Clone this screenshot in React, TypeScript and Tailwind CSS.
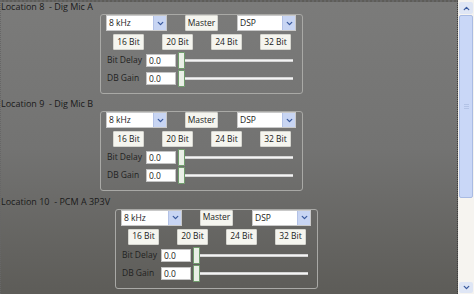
import { ChevronDown, ChevronUp } from 'lucide-react'

const font = { fontFamily: '"Open Sans", "Noto Sans", sans-serif' }

interface Location {
  title: string
}

const locations: Location[] = [
  { title: 'Location 8  - Dig Mic A' },
  { title: 'Location 9  - Dig Mic B' },
  { title: 'Location 10  - PCM A 3P3V' },
]

function Combo({ value, width }: { value: string; width: string }) {
  return (
    <div className={`flex h-[16px] items-stretch bg-white border border-[#c9c9c9] ${width}`}>
      <span className="flex-1 pl-[2px] leading-[14px] text-[#1b1b1b]">{value}</span>
      <span className="flex w-[13px] items-center justify-center bg-[#c8d5f3] border-l border-[#b3c2e6]">
        <ChevronDown className="h-[9px] w-[9px] text-[#3a5a9e]" strokeWidth={3.5} />
      </span>
    </div>
  )
}

function SmallButton({ label, width }: { label: string; width: string }) {
  return (
    <div
      className={`flex h-[16px] items-center justify-center bg-[#f5f5ef] border border-[#d6d6d0] rounded-[1px] text-[#1b1b1b] ${width}`}
    >
      {label}
    </div>
  )
}

function SliderRow({ label }: { label: string }) {
  return (
    <div className="flex h-[17px] items-center">
      <span className="w-[40px] pl-[1px] text-[#222] whitespace-nowrap">{label}</span>
      <div className="h-[13px] w-[30px] bg-white border border-[#c4c4c4] pl-[2px] leading-[11px] text-[8.5px] text-[#1b1b1b]">
        0.0
      </div>
      <div className="ml-[2px] h-[17px] w-[7px] rounded-[1px] bg-[#e9efe6] border border-[#6f9d6c]" />
      <div className="h-[3px] w-[108px] bg-[#f4f4f4] border-y border-[#d4d4d4]" />
    </div>
  )
}

function LocationPanel() {
  return (
    <div className="mt-[12px] flex h-[80px] w-[203px] flex-col rounded-[3px] border border-[#a9a9a6] pl-[5px] text-[8.5px]">
      <div className="flex items-center">
        <Combo value="8 kHz" width="w-[61px]" />
        <div className="ml-[18px]">
          <SmallButton label="Master" width="w-[33px]" />
        </div>
        <div className="ml-[19px]">
          <Combo value="DSP" width="w-[59px]" />
        </div>
      </div>
      <div className="mt-[3px] ml-[7px] flex gap-[18px]">
        <SmallButton label="16 Bit" width="w-[31px]" />
        <SmallButton label="20 Bit" width="w-[31px]" />
        <SmallButton label="24 Bit" width="w-[31px]" />
        <SmallButton label="32 Bit" width="w-[31px]" />
      </div>
      <div className="mt-[2px] flex flex-col gap-[1px]">
        <SliderRow label="Bit Delay" />
        <SliderRow label="DB Gain" />
      </div>
    </div>
  )
}

function Scrollbar() {
  return (
    <div className="flex h-full w-[16px] flex-col bg-[#f6f4f0] px-[1px]">
      <div className="mt-[2px] flex h-[12px] items-center justify-center rounded-[2px] bg-[#dfe6f5]">
        <ChevronUp className="h-[9px] w-[9px] text-[#3a5a9e]" strokeWidth={3.5} />
      </div>
      <div className="mt-[1px] flex h-[183px] items-center justify-center rounded-[2px] border border-[#a9bbe3] bg-[#c9d7f7]">
        <div className="flex flex-col gap-[1px]">
          <div className="h-px w-[5px] bg-[#b3c3e6]" />
          <div className="h-px w-[5px] bg-[#b3c3e6]" />
          <div className="h-px w-[5px] bg-[#b3c3e6]" />
        </div>
      </div>
      <div className="flex-1" />
      <div className="mb-[1px] flex h-[11px] items-center justify-center rounded-[2px] bg-[#dfe6f5]">
        <ChevronDown className="h-[9px] w-[9px] text-[#3a5a9e]" strokeWidth={3.5} />
      </div>
    </div>
  )
}

export default function App() {
  return (
    <div className="flex h-[294px] w-[474px] overflow-hidden" style={font}>
      <div className="flex flex-1 flex-col border-t-2 border-l border-dotted border-[#666] border-r-[#3d3d3d] border-r border-r-solid bg-gradient-to-b from-[#7b7b7a] via-[#737372] to-[#5d5c58]">
        {locations.map((loc) => (
          <div key={loc.title} className="flex h-[98px] items-start">
            <span className="min-w-[99px] pr-[5px] text-[9px] leading-[10px] text-[#1a1a1a] whitespace-pre">
              {loc.title}
            </span>
            <LocationPanel />
          </div>
        ))}
      </div>
      <Scrollbar />
    </div>
  )
}
